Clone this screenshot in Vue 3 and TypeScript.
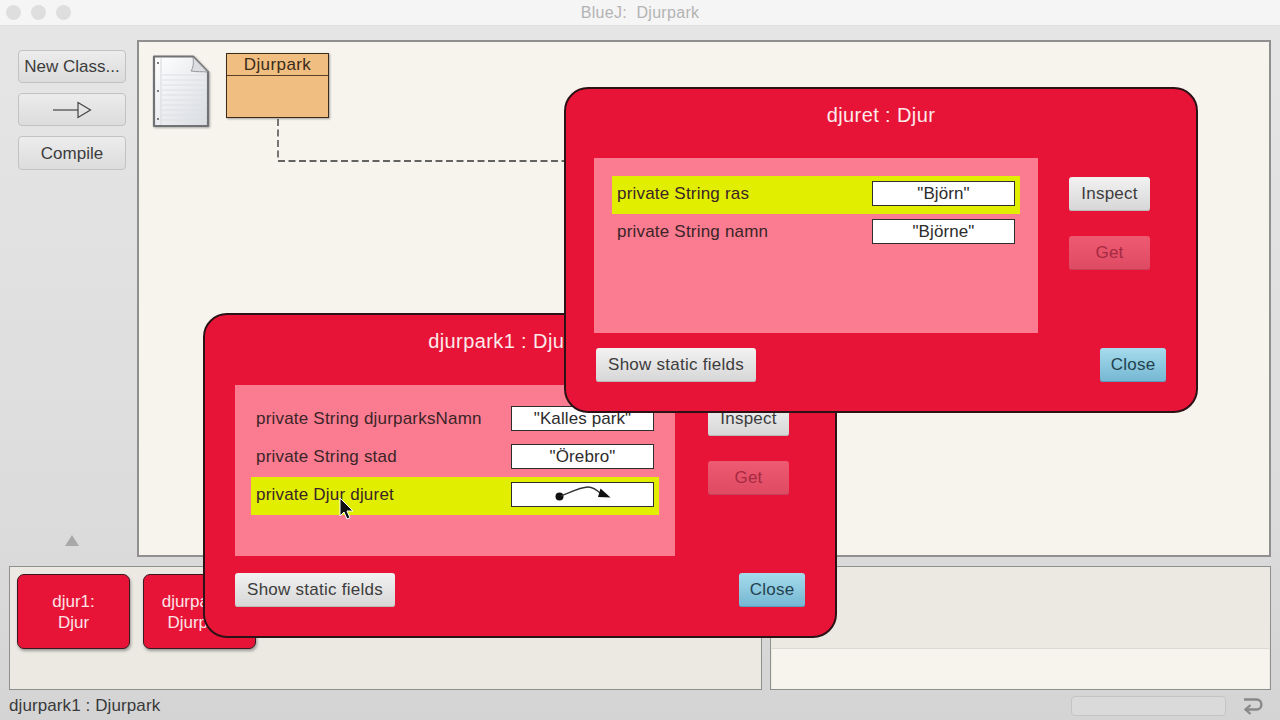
<script setup lang="ts">
interface Field { label: string; value: string; selected?: boolean; isRef?: boolean }
interface Win { key: string; title: string; fields: Field[] }

const windows: Win[] = [
  {
    key: 'win-park',
    title: 'djurpark1 : Djurpark',
    fields: [
      { label: 'private String djurparksNamn', value: '"Kalles park"' },
      { label: 'private String stad', value: '"Örebro"' },
      { label: 'private Djur djuret', value: '', selected: true, isRef: true },
    ],
  },
  {
    key: 'win-djur',
    title: 'djuret : Djur',
    fields: [
      { label: 'private String ras', value: '"Björn"', selected: true },
      { label: 'private String namn', value: '"Björne"' },
    ],
  },
]
const paperLines: number[] = [10, 15, 20, 25, 30, 35, 40, 45, 50, 55]
</script>

<template>
  <div class="app">
    <header class="titlebar">
      <div class="lights"><i></i><i></i><i></i></div>
      <span class="app-title">BlueJ:&nbsp; Djurpark</span>
    </header>

    <section class="main">
      <aside class="side">
        <div class="side-buttons">
          <button class="tool">New Class...</button>
          <button class="tool tool-arrow" aria-label="New arrow">
            <svg width="40" height="18" viewBox="0 0 40 18">
              <path d="M1 9H26" stroke="#444" stroke-width="1.2" fill="none" />
              <path d="M26 1.500 38.500 9 26 16.500Z" stroke="#444" stroke-width="1.2" fill="none" />
            </svg>
          </button>
          <button class="tool tool-compile">Compile</button>
        </div>
        <span class="up-triangle"></span>
      </aside>

      <div class="canvas">
        <svg class="note" width="58" height="73" viewBox="0 0 58 73">
          <defs>
            <linearGradient id="paper" x1="0" y1="0" x2="1" y2="1">
              <stop offset="0" stop-color="#ffffff" />
              <stop offset="1" stop-color="#d9dce1" />
            </linearGradient>
          </defs>
          <path d="M2 1.500H41L56 17V71H2Z" fill="url(#paper)" stroke="#707275" stroke-width="2.200" stroke-linejoin="round" />
          <path d="M9 3V70" stroke="#d4d7db" stroke-width="1" />
          <path v-for="y in paperLines" :key="y" :d="`M10 ${y + 10}H55`" stroke="#dde0e5" stroke-width="1" />
          <path d="M41 2C42 9 41 13 39 16C45 17 50 16.500 55.500 17Z" fill="#dcdee1" stroke="#96989b" stroke-width="1" />
          <circle cx="6" cy="8" r="1" fill="#555" />
          <circle cx="6" cy="36" r="1" fill="#555" />
          <circle cx="6" cy="64" r="1" fill="#555" />
        </svg>
        <div class="class-box">
          <div class="class-name">Djurpark</div>
        </div>
        <svg class="dep" width="300" height="50" viewBox="0 0 300 50">
          <path d="M1 0V42H300" fill="none" stroke="#333" stroke-width="1.300" stroke-dasharray="7 3.500" />
        </svg>
      </div>
    </section>

    <section class="bottom">
      <div class="bench">
        <div class="obj">djur1:<br />Djur</div>
        <div class="obj">djurpark1:<br />Djurpark</div>
      </div>
      <div class="term">
        <div class="term-input"></div>
      </div>
    </section>

    <footer class="status">
      <span class="status-text">djurpark1 : Djurpark</span>
      <div class="status-right">
        <div class="progress"></div>
        <svg width="22" height="22" viewBox="0 0 22 22">
          <path d="M2 4.500H14.500C21 4.500 21 14.500 14.500 14.500H4" fill="none" stroke="#888" stroke-width="2.300" />
          <path d="M8.500 10 3.500 14.500 8.500 19" fill="none" stroke="#888" stroke-width="2.300" />
        </svg>
      </div>
    </footer>

    <div v-for="w in windows" :key="w.key" class="inspector" :class="w.key">
      <h2 class="win-title">{{ w.title }}</h2>
      <div class="win-body">
        <div class="fields">
          <div v-for="f in w.fields" :key="f.label" class="row" :class="{ selected: f.selected }">
            <span class="label">{{ f.label }}</span>
            <span class="value">
              <template v-if="!f.isRef">{{ f.value }}</template>
              <svg v-else width="60" height="18" viewBox="0 0 60 18">
                <circle cx="6.500" cy="10.500" r="4" fill="#111" />
                <path d="M8 10C18 6 28 1 35 1C40 1 44 4 48 8" fill="none" stroke="#333" stroke-width="1.300" />
                <path d="M47.500 2.500 57.500 11.500 45 11Z" fill="#111" />
              </svg>
            </span>
          </div>
        </div>
        <div class="win-actions">
          <button class="btn">Inspect</button>
          <button class="btn btn-off">Get</button>
        </div>
      </div>
      <div class="win-foot">
        <button class="btn btn-static">Show static fields</button>
        <button class="btn btn-close">Close</button>
      </div>
    </div>

    <svg class="cursor" width="18" height="24" viewBox="0 0 18 24">
      <path d="M3 1V19L7 15 10 22 13 20.700 10 14H16Z" fill="#111" stroke="#fff" stroke-width="1" />
    </svg>
  </div>
</template>

<style>
html, body { margin: 0; padding: 0; }
</style>

<style scoped>
.app {
  position: relative;
  width: 1280px;
  height: 720px;
  overflow: hidden;
  display: flex;
  flex-direction: column;
  background: linear-gradient(180deg, #e6e6e6 0%, #dcdcdc 70%, #d4d4d4 100%);
  font-family: "Liberation Sans", Arial, sans-serif;
  color: #333;
}
button { font-family: inherit; margin: 0; padding: 0; cursor: default; }

.titlebar {
  height: 26px;
  flex: none;
  position: relative;
  display: flex;
  align-items: center;
  justify-content: center;
  background: #f5f5f5;
  border-bottom: 1px solid #dedede;
  box-sizing: border-box;
  padding-top: 1px;
}
.lights { position: absolute; left: 6px; top: 5px; display: flex; gap: 10px; }
.lights i { width: 15px; height: 15px; border-radius: 50%; background: #dedede; }
.app-title { font-size: 16px; color: #b3b3b3; letter-spacing: 0.3px; }

.main { height: 531px; flex: none; display: flex; padding: 14px 9px 0 0; box-sizing: border-box; }
.side {
  width: 137px;
  flex: none;
  box-sizing: border-box;
  padding-left: 7px;
  display: flex;
  flex-direction: column;
  align-items: center;
}
.side-buttons { margin-top: 10px; display: flex; flex-direction: column; gap: 10px; }
.tool {
  width: 108px;
  height: 33px;
  font-size: 17px;
  color: #3c3c3c;
  border: 1px solid #c2c2c2;
  border-radius: 4px;
  background: linear-gradient(180deg, #ececec, #dcdcdc);
  box-sizing: border-box;
}
.tool-compile { height: 34px; padding-top: 1px; }
.tool-arrow { display: flex; align-items: center; justify-content: center; }
.up-triangle {
  margin-top: auto;
  margin-bottom: 11px;
  width: 0;
  height: 0;
  border-left: 7.500px solid transparent;
  border-right: 7.500px solid transparent;
  border-bottom: 11px solid #a8a8a8;
}
.canvas {
  flex: 1;
  position: relative;
  background: #f7f4ee;
  border: 2px solid #8f8f8f;
  box-sizing: border-box;
}
.note { position: absolute; left: 13px; top: 13px; filter: drop-shadow(1px 1px 1px rgba(0, 0, 0, 0.3)); }
.class-box {
  position: absolute;
  left: 87px;
  top: 11px;
  width: 103px;
  height: 65px;
  box-sizing: border-box;
  background: #efbe80;
  border: 1.500px solid #3d2c1c;
  box-shadow: 1px 1px 2px rgba(0, 0, 0, 0.35);
}
.class-name {
  height: 21px;
  border-bottom: 1.500px solid #5a4024;
  text-align: center;
  font-size: 17px;
  line-height: 21px;
  color: #3a2c1c;
  letter-spacing: 0.4px;
}
.dep { position: absolute; left: 138px; top: 77px; }

.bottom { height: 124px; flex: none; margin-top: 9px; padding: 0 9px; display: flex; gap: 8px; }
.bench {
  width: 753px;
  flex: none;
  box-sizing: border-box;
  background: #ece9e3;
  border: 1px solid #8f8f8f;
  padding: 7px;
  display: flex;
  gap: 13px;
  align-items: flex-start;
}
.obj {
  width: 113px;
  height: 75px;
  box-sizing: border-box;
  background: #e81438;
  border: 1px solid #3a1a20;
  border-radius: 7px;
  box-shadow: 1px 2px 3px rgba(0, 0, 0, 0.35);
  color: #fbe4e6;
  font-size: 17px;
  line-height: 21px;
  text-align: center;
  padding-top: 16px;
  overflow: hidden;
  white-space: nowrap;
}
.term {
  flex: 1;
  box-sizing: border-box;
  background: #ece9e3;
  border: 1px solid #8f8f8f;
  display: flex;
  flex-direction: column;
  justify-content: flex-end;
  padding: 0 1px;
}
.term-input { height: 41px; box-sizing: border-box; background: #f7f4ee; border-top: 1px solid #dcdad5; }

.status { flex: 1; display: flex; align-items: center; justify-content: space-between; padding: 1px 16px 0 9px; }
.status-text { font-size: 17px; color: #3a3a3a; letter-spacing: 0.1px; }
.status-right { display: flex; align-items: center; gap: 16px; }
.progress {
  width: 155px;
  height: 20px;
  box-sizing: border-box;
  border: 1px solid #c4c4c4;
  border-radius: 4px;
  background: #dadada;
}

.inspector {
  position: absolute;
  width: 634px;
  box-sizing: border-box;
  background: #e81438;
  border: 2px solid #2c1216;
  border-radius: 24px;
  padding-left: var(--pad-left);
}
.win-park {
  left: 203px;
  top: 313px;
  height: 325px;
  --pad-left: 30px;
  --panel-w: 440px;
  --panel-h: 171px;
  --row-pad: 16px;
  --side-gap: 33px;
  --title-h: 70px;
  --foot-gap: 17px;
}
.win-djur {
  left: 564px;
  top: 87px;
  height: 326px;
  --pad-left: 28px;
  --panel-w: 444px;
  --panel-h: 175px;
  --row-pad: 18px;
  --side-gap: 31px;
  --title-h: 69px;
  --foot-gap: 15px;
}
.win-title {
  margin: 0 0 0 calc(0px - var(--pad-left));
  height: var(--title-h);
  padding-top: 13px;
  box-sizing: border-box;
  text-align: center;
  font-size: 20px;
  line-height: 26px;
  font-weight: 400;
  color: #fbeaea;
  letter-spacing: 0.4px;
}
.win-body { display: flex; align-items: flex-start; height: var(--panel-h); }
.fields {
  width: var(--panel-w);
  height: var(--panel-h);
  box-sizing: border-box;
  background: #fb7c90;
  padding: var(--row-pad) var(--row-pad) 0;
}
.row {
  height: 38px;
  box-sizing: border-box;
  display: flex;
  align-items: center;
  justify-content: space-between;
  padding: 0 5px 3px;
}
.row.selected { background: #e2ee00; }
.label { font-size: 17px; color: #3a2428; letter-spacing: 0.2px; }
.value {
  width: 143px;
  height: 25px;
  box-sizing: border-box;
  display: flex;
  align-items: center;
  justify-content: center;
  background: #fff;
  border: 1px solid #2e2e2e;
  font-size: 17px;
  color: #2c2c2c;
  letter-spacing: 0.1px;
}
.win-actions {
  margin-left: var(--side-gap);
  padding-top: calc(var(--row-pad) + 1px);
  display: flex;
  flex-direction: column;
  gap: 25px;
}
.btn {
  height: 34px;
  box-sizing: border-box;
  border: 0;
  border-radius: 3px;
  background: linear-gradient(180deg, #f2f2f2, #d6d6d6);
  box-shadow: inset 0 -1px 0 #b9b9b9;
  color: #3c3c3c;
  font-size: 17px;
  letter-spacing: 0.25px;
}
.win-actions .btn { width: 81px; }
.btn-off {
  background: linear-gradient(180deg, #ee5a72, #dd4a62);
  box-shadow: inset 0 -1px 0 #c8405a;
  color: #a52a42;
}
.win-foot {
  margin: var(--foot-gap) 30px 0 calc(30px - var(--pad-left));
  display: flex;
  justify-content: space-between;
}
.btn-static { width: 160px; }
.btn-close {
  width: 66px;
  background: linear-gradient(180deg, #a6dcec, #74b6d2);
  box-shadow: inset 0 -1px 0 #5e9cb8;
  color: #23424f;
}
.cursor { position: absolute; left: 337px; top: 497px; }
</style>
